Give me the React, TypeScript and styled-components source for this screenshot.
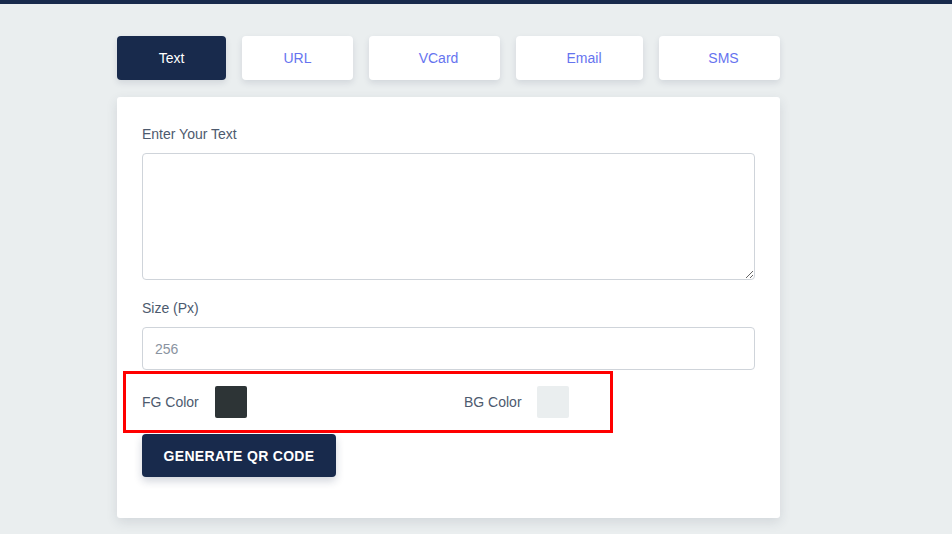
import React from "react";
import styled, { createGlobalStyle } from "styled-components";

const Global = createGlobalStyle`
  html, body { margin: 0; padding: 0; }
  body {
    background: #eaeeef;
    font-family: "Liberation Sans", Arial, sans-serif;
    min-height: 534px;
  }
  * { box-sizing: border-box; }
`;

const TopBar = styled.div`
  height: 4px;
  background: #182a4c;
`;

const Page = styled.div`
  padding: 32px 0 0 117px;
  width: 780px;
`;

const Tabs = styled.div`
  display: flex;
  gap: 16px;
  margin-bottom: 17px;
`;

const Tab = styled.button<{ $active?: boolean; $w: number; $shift: number }>`
  width: ${(p) => p.$w}px;
  height: 44px;
  border: none;
  border-radius: 4px;
  font-family: "Liberation Sans", Arial, sans-serif;
  font-size: 14px;
  background: ${(p) => (p.$active ? "#182a4c" : "#ffffff")};
  color: ${(p) => (p.$active ? "#ffffff" : "#6674ef")};
  box-shadow: 0 3px 6px rgba(40, 50, 80, 0.12);
  cursor: pointer;
  padding: 0 0 0 ${(p) => p.$shift}px;
`;

const Card = styled.div`
  width: 663px;
  background: #ffffff;
  border-radius: 3px;
  box-shadow: 0 4px 12px rgba(40, 50, 70, 0.12);
  padding: 28px 25px 41px 25px;
`;

const Label = styled.div`
  font-size: 14px;
  color: #4d5a6e;
  line-height: 18px;
  margin-bottom: 10px;
`;

const TextArea = styled.textarea`
  display: block;
  width: 613px;
  height: 127px;
  border: 1px solid #cfd4da;
  border-radius: 4px;
  resize: vertical;
  outline: none;
  margin-bottom: 19px;
  font-family: inherit;
`;

const Input = styled.input`
  display: block;
  width: 613px;
  height: 43px;
  border: 1px solid #cfd4da;
  border-radius: 4px;
  padding: 0 12px;
  font-size: 14px;
  font-family: "Liberation Sans", Arial, sans-serif;
  color: #4a5568;
  outline: none;
  &::placeholder { color: #8a93a0; }
`;

const ColorRow = styled.div`
  display: grid;
  grid-template-columns: 322px auto;
  align-items: center;
  margin: 1px 0 0 -19px;
  width: 490px;
  height: 62px;
  border: 3px solid #ff0000;
  padding-left: 16px;
`;

const ColorField = styled.div<{ $gap: number }>`
  display: flex;
  align-items: center;
  gap: ${(p) => p.$gap}px;
`;

const ColorLabel = styled.span`
  font-size: 14px;
  color: #4d5a6e;
`;

const Swatch = styled.div<{ $c: string }>`
  width: 32px;
  height: 32px;
  border-radius: 2px;
  background: ${(p) => p.$c};
`;

const Generate = styled.button`
  display: block;
  margin-top: 1px;
  width: 194px;
  height: 43px;
  border: none;
  border-radius: 4px;
  background: #182a4c;
  color: #ffffff;
  font-family: "Liberation Sans", Arial, sans-serif;
  font-weight: bold;
  font-size: 14px;
  letter-spacing: 0.3px;
  box-shadow: 0 4px 8px rgba(24, 42, 76, 0.2);
  cursor: pointer;
`;

const tabs = [
  { label: "Text", w: 109, shift: 0 },
  { label: "URL", w: 111, shift: 0 },
  { label: "VCard", w: 131, shift: 8 },
  { label: "Email", w: 127, shift: 9 },
  { label: "SMS", w: 121, shift: 8 },
];

export default function App() {
  return (
    <>
      <Global />
      <TopBar />
      <Page>
        <Tabs>
          {tabs.map((t, i) => (
            <Tab key={t.label} $active={i === 0} $w={t.w} $shift={t.shift}>
              {t.label}
            </Tab>
          ))}
        </Tabs>
        <Card>
          <Label>Enter Your Text</Label>
          <TextArea />
          <Label>Size (Px)</Label>
          <Input placeholder="256" />
          <ColorRow>
            <ColorField $gap={16}>
              <ColorLabel>FG Color</ColorLabel>
              <Swatch $c="#2d3436" />
            </ColorField>
            <ColorField $gap={15}>
              <ColorLabel>BG Color</ColorLabel>
              <Swatch $c="#eaeeef" />
            </ColorField>
          </ColorRow>
          <Generate>GENERATE QR CODE</Generate>
        </Card>
      </Page>
    </>
  );
}
